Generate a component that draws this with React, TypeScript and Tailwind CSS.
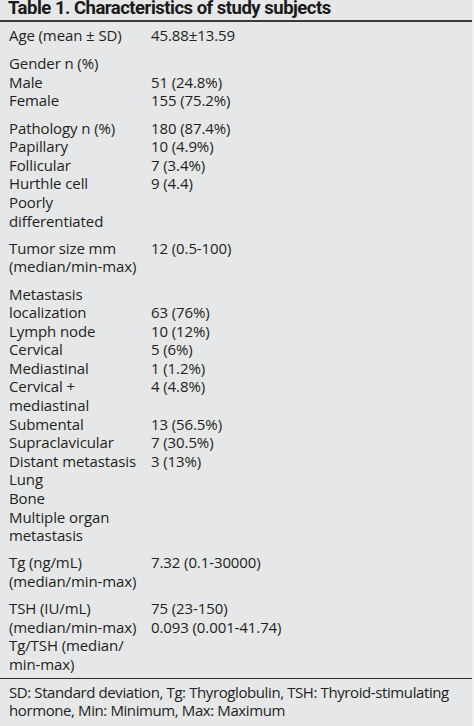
type Row = [string, string?];

const groups: Row[][] = [
  [["Age (mean ± SD)", "45.88±13.59"]],
  [["Gender n (%)"], ["Male", "51 (24.8%)"], ["Female", "155 (75.2%)"]],
  [
    ["Pathology n (%)", "180 (87.4%)"],
    ["Papillary", "10 (4.9%)"],
    ["Follicular", "7 (3.4%)"],
    ["Hurthle cell", "9 (4.4)"],
    ["Poorly"],
    ["differentiated"],
  ],
  [["Tumor size mm", "12 (0.5-100)"], ["(median/min-max)"]],
  [
    ["Metastasis"],
    ["localization", "63 (76%)"],
    ["Lymph node", "10 (12%)"],
    ["Cervical", "5 (6%)"],
    ["Mediastinal", "1 (1.2%)"],
    ["Cervical +", "4 (4.8%)"],
    ["mediastinal"],
    ["Submental", "13 (56.5%)"],
    ["Supraclavicular", "7 (30.5%)"],
    ["Distant metastasis", "3 (13%)"],
    ["Lung"],
    ["Bone"],
    ["Multiple organ"],
    ["metastasis"],
  ],
  [["Tg (ng/mL)", "7.32 (0.1-30000)"], ["(median/min-max)"]],
  [
    ["TSH (IU/mL)", "75 (23-150)"],
    ["(median/min-max)", "0.093 (0.001-41.74)"],
    ["Tg/TSH (median/"],
    ["min-max)"],
  ],
];

export default function App() {
  return (
    <div
      className="w-[474px] h-[726px] overflow-hidden bg-[#e6e7e8] text-[#231f20] border-r-2 border-[#f1f1f2]"
      style={{ fontFamily: '"Open Sans", "Noto Sans", sans-serif' }}
    >
      <div className="h-[20px] px-[8px]">
        <h1
          className="text-[18.5px] font-bold leading-[16px] tracking-[-0.5px] text-[#1a1a1a]"
          style={{ fontFamily: 'Roboto, "Liberation Sans", sans-serif' }}
        >
          Table 1. Characteristics of study subjects
        </h1>
      </div>
      <div className="h-[2px] bg-[#3a3a3a]" />

      <div className="pt-[4px] pb-[4px] px-[9px] flex flex-col gap-[8.6px] text-[15px] leading-[18.6px] tracking-[-0.1px]">
        {groups.map((g, gi) => (
          <div key={gi} className={gi === 1 ? "mt-[1px]" : ""}>
            {g.map(([label, value], ri) => (
              <div key={ri} className="grid grid-cols-[142px_1fr]">
                <span className="whitespace-nowrap">{label}</span>
                <span className="whitespace-nowrap">{value ?? ""}</span>
              </div>
            ))}
          </div>
        ))}
      </div>

      <div className="h-[1.5px] bg-[#2b2b2b]" />
      <p className="px-[9px] pt-[4px] text-[15px] leading-[18.4px] tracking-[-0.4px] whitespace-nowrap">
        SD: Standard deviation, Tg: Thyroglobulin, TSH: Thyroid-stimulating
        <br />
        hormone, Min: Minimum, Max: Maximum
      </p>
    </div>
  );
}
